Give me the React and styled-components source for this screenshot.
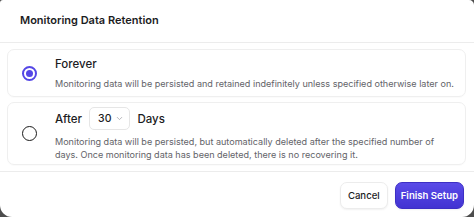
import React from "react";
import styled, { createGlobalStyle } from "styled-components";

const Global = createGlobalStyle`
  html, body { margin: 0; padding: 0; background: #4d4d4d; }
  body { font-family: Inter, "Noto Sans", sans-serif; -webkit-font-smoothing: antialiased; }
`;

const Modal = styled.div`
  width: 474px;
  height: 217px;
  background: #ffffff;
  border-radius: 3px 5px 12px 12px;
  display: flex;
  flex-direction: column;
  overflow: hidden;
  box-sizing: border-box;
`;

const Header = styled.div`
  flex: none;
  height: 43px;
  box-sizing: border-box;
  padding: 0 20px 2px;
  display: flex;
  align-items: center;
  border-bottom: 1px solid #ececec;
  font-size: 11px;
  font-weight: 600;
  color: #1c1c1e;
`;

const Body = styled.div`
  flex: none;
  padding: 6px 8px 6px 7px;
  display: flex;
  flex-direction: column;
  gap: 5px;
  border-bottom: 1px solid #ececec;
`;

const Card = styled.div`
  border: 1px solid #efefef;
  border-radius: 7px;
  display: flex;
  align-items: center;
  box-sizing: border-box;
  height: ${(p) => (p.$tall ? "63px" : "48px")};
  padding: 0 10px 0 14px;
  gap: 18px;
  box-shadow: 0 1px 1px rgba(0, 0, 0, 0.02);
`;

const Radio = styled.span`
  width: 15px;
  height: 15px;
  border-radius: 50%;
  box-sizing: border-box;
  flex: none;
  border: ${(p) => (p.$checked ? "2px solid #5547e6" : "1.6px solid #1a1a1a")};
  display: flex;
  align-items: center;
  justify-content: center;
  &::after {
    content: "";
    display: ${(p) => (p.$checked ? "block" : "none")};
    width: 7px;
    height: 7px;
    border-radius: 50%;
    background: #5547e6;
  }
`;

const Content = styled.div`
  display: flex;
  flex-direction: column;
`;

const Title = styled.div`
  font-size: 11.5px;
  font-weight: 500;
  color: #1c1c1e;
  display: flex;
  align-items: center;
  gap: 7px;
  height: ${(p) => (p.$tall ? "24px" : "16px")};
`;

const Desc = styled.div`
  margin-top: ${(p) => (p.$tall ? "4px" : "5px")};
  font-size: 9.05px;
  line-height: 13px;
  color: #636368;
  white-space: nowrap;
`;

const Select = styled.div`
  height: 23px;
  box-sizing: border-box;
  border: 1px solid #e6e6e6;
  border-radius: 5px;
  padding: 0 5px 0 8px;
  display: flex;
  align-items: center;
  gap: 4px;
  font-size: 10.5px;
  font-weight: 500;
  color: #1c1c1e;
`;

const Footer = styled.div`
  flex: 1;
  display: flex;
  justify-content: flex-end;
  align-items: center;
  gap: 7px;
  padding: 1px 10px 0 0;
`;

const Button = styled.button`
  height: 27px;
  box-sizing: border-box;
  border-radius: 7px;
  font-family: inherit;
  font-size: 9.6px;
  font-weight: ${(p) => (p.$primary ? 600 : 500)};
  padding: 0 ${(p) => (p.$primary ? "5px" : "7px")};
  cursor: pointer;
  border: ${(p) => (p.$primary ? "1px solid #3d2fc4" : "1px solid #ececec")};
  background: ${(p) => (p.$primary ? "linear-gradient(#5a4be8, #4233d2)" : "#ffffff")};
  color: ${(p) => (p.$primary ? "#ffffff" : "#1c1c1e")};
  box-shadow: 0 1px 2px rgba(0, 0, 0, 0.06);
`;

export default function App() {
  return (
    <>
      <Global />
      <Modal>
        <Header>Monitoring Data Retention</Header>
        <Body>
          <Card>
            <Radio $checked />
            <Content>
              <Title>Forever</Title>
              <Desc>
                Monitoring data will be persisted and retained indefinitely unless specified otherwise later on.
              </Desc>
            </Content>
          </Card>
          <Card $tall>
            <Radio />
            <Content>
              <Title $tall>
                After
                <Select>
                  30
                  <svg width="9" height="9" viewBox="0 0 24 24" fill="none" stroke="#a0a0a6" strokeWidth="2" strokeLinecap="round" strokeLinejoin="round">
                    <path d="M6 9l6 6 6-6" />
                  </svg>
                </Select>
                Days
              </Title>
              <Desc $tall>
                Monitoring data will be persisted, but automatically deleted after the specified number of
                <br />
                days. Once monitoring data has been deleted, there is no recovering it.
              </Desc>
            </Content>
          </Card>
        </Body>
        <Footer>
          <Button>Cancel</Button>
          <Button $primary>Finish Setup</Button>
        </Footer>
      </Modal>
    </>
  );
}
